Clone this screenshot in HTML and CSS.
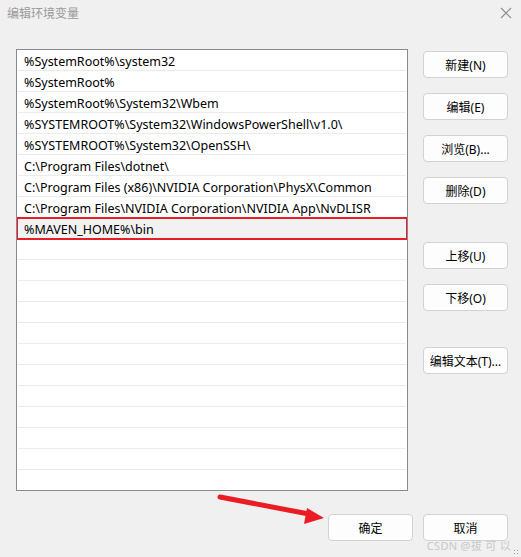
FILE: index.html
```html
<!DOCTYPE html>
<html lang="zh-CN">
<head>
    <meta charset="UTF-8">
    <meta name="viewport" content="width=device-width, initial-scale=1.0">
    <title>编辑环境变量</title>
    <link rel="stylesheet" href="styles.css">
</head>
<body>

    <div class="dialog">
        <div class="titlebar">
            <span class="title">编辑环境变量</span>
            <svg class="close" width="12" height="12" viewBox="0 0 12 12">
                <path d="M1 1 L11 11 M11 1 L1 11" stroke="#8a8a8a" stroke-width="1.1" fill="none"/>
            </svg>
        </div>

        <div class="content">
            <div class="path-list" id="pathList"></div>

            <div class="side-buttons">
                <button class="btn">新建(N)</button>
                <button class="btn">编辑(E)</button>
                <button class="btn">浏览(B)...</button>
                <button class="btn">删除(D)</button>
                <button class="btn group-start">上移(U)</button>
                <button class="btn">下移(O)</button>
                <button class="btn group-start-small">编辑文本(T)...</button>
            </div>
        </div>

        <div class="footer">
            <button class="btn">确定</button>
            <button class="btn">取消</button>
        </div>

        <svg class="arrow" width="521" height="557" viewBox="0 0 521 557">
            <path d="M220 497 L309 514" stroke="#ec1c24" stroke-width="5" stroke-linecap="round" fill="none"/>
            <polygon points="324,518 307,508 304,524" fill="#ec1c24"/>
        </svg>

        <div class="watermark">CSDN @拔 可 以</div>
        <div class="grip"></div>
    </div>

    <script>
        const paths = [
            '%SystemRoot%\\system32',
            '%SystemRoot%',
            '%SystemRoot%\\System32\\Wbem',
            '%SYSTEMROOT%\\System32\\WindowsPowerShell\\v1.0\\',
            '%SYSTEMROOT%\\System32\\OpenSSH\\',
            'C:\\Program Files\\dotnet\\',
            'C:\\Program Files (x86)\\NVIDIA Corporation\\PhysX\\Common',
            'C:\\Program Files\\NVIDIA Corporation\\NVIDIA App\\NvDLISR',
            '%MAVEN_HOME%\\bin'
        ];

        const list = document.getElementById('pathList');
        const totalRows = 21;

        for (let i = 0; i < totalRows; i++) {
            const row = document.createElement('div');
            row.className = 'row';
            row.textContent = paths[i] || '';
            if (i === paths.length - 1) {
                row.classList.add('selected');
            }
            list.appendChild(row);
        }
    </script>

</body>
</html>
```

FILE: styles.css
```css
body {
    margin: 0;
    background-color: #f0f0f0;
    font-family: 'Noto Sans', 'Noto Sans CJK SC', sans-serif;
    font-size: 12px;
    color: #000;
}

.dialog {
    position: relative;
    width: 521px;
    height: 557px;
    overflow: hidden;
}

.titlebar {
    height: 26px;
    display: flex;
    align-items: center;
    justify-content: space-between;
    padding: 0 9px 0 7px;
}

.title {
    color: #9a9a9a;
    font-size: 12px;
}

.close {
    margin-top: -1px;
}

.content {
    display: flex;
    padding: 23px 13px 0 16px;
}

.path-list {
    width: 390px;
    height: 440px;
    border: 1px solid #868a91;
    background-color: #fff;
    overflow: hidden;
}

.row {
    position: relative;
    height: 20px;
    line-height: 24px;
    margin: 0 1px;
    padding-left: 6px;
    border-bottom: 1px solid #ebebeb;
    font-size: 12.5px;
    white-space: nowrap;
    overflow: hidden;
}

.row.selected {
    background-color: #f2f2f2;
    outline: 2px solid #e81d25;
    outline-offset: -1px;
    overflow: visible;
    margin: 0 0;
    padding-left: 7px;
}

.side-buttons {
    display: flex;
    flex-direction: column;
    gap: 15px;
    margin-left: 15px;
    padding-top: 2px;
}

.btn {
    width: 85px;
    height: 27px;
    padding: 0;
    background-color: #fdfdfd;
    border: 1px solid #d2d2d2;
    border-radius: 4px;
    font-family: 'Noto Sans', 'Noto Sans CJK SC', sans-serif;
    font-size: 12px;
    color: #000;
    cursor: pointer;
}

.btn.group-start {
    margin-top: 23px;
}

.btn.group-start-small {
    margin-top: 21px;
}

.footer {
    display: flex;
    justify-content: flex-end;
    gap: 10px;
    padding: 23px 13px 0 0;
}

.arrow {
    position: absolute;
    left: 0;
    top: 0;
    pointer-events: none;
}

.watermark {
    position: absolute;
    right: 10px;
    bottom: 4px;
    font-size: 11px;
    color: #c8c8c8;
    letter-spacing: 0.3px;
}

.grip {
    position: absolute;
    right: 1px;
    bottom: 1px;
    width: 7px;
    height: 7px;
    background-image: radial-gradient(circle, #a0a0a0 0.8px, transparent 1px);
    background-size: 3px 3px;
}
```
